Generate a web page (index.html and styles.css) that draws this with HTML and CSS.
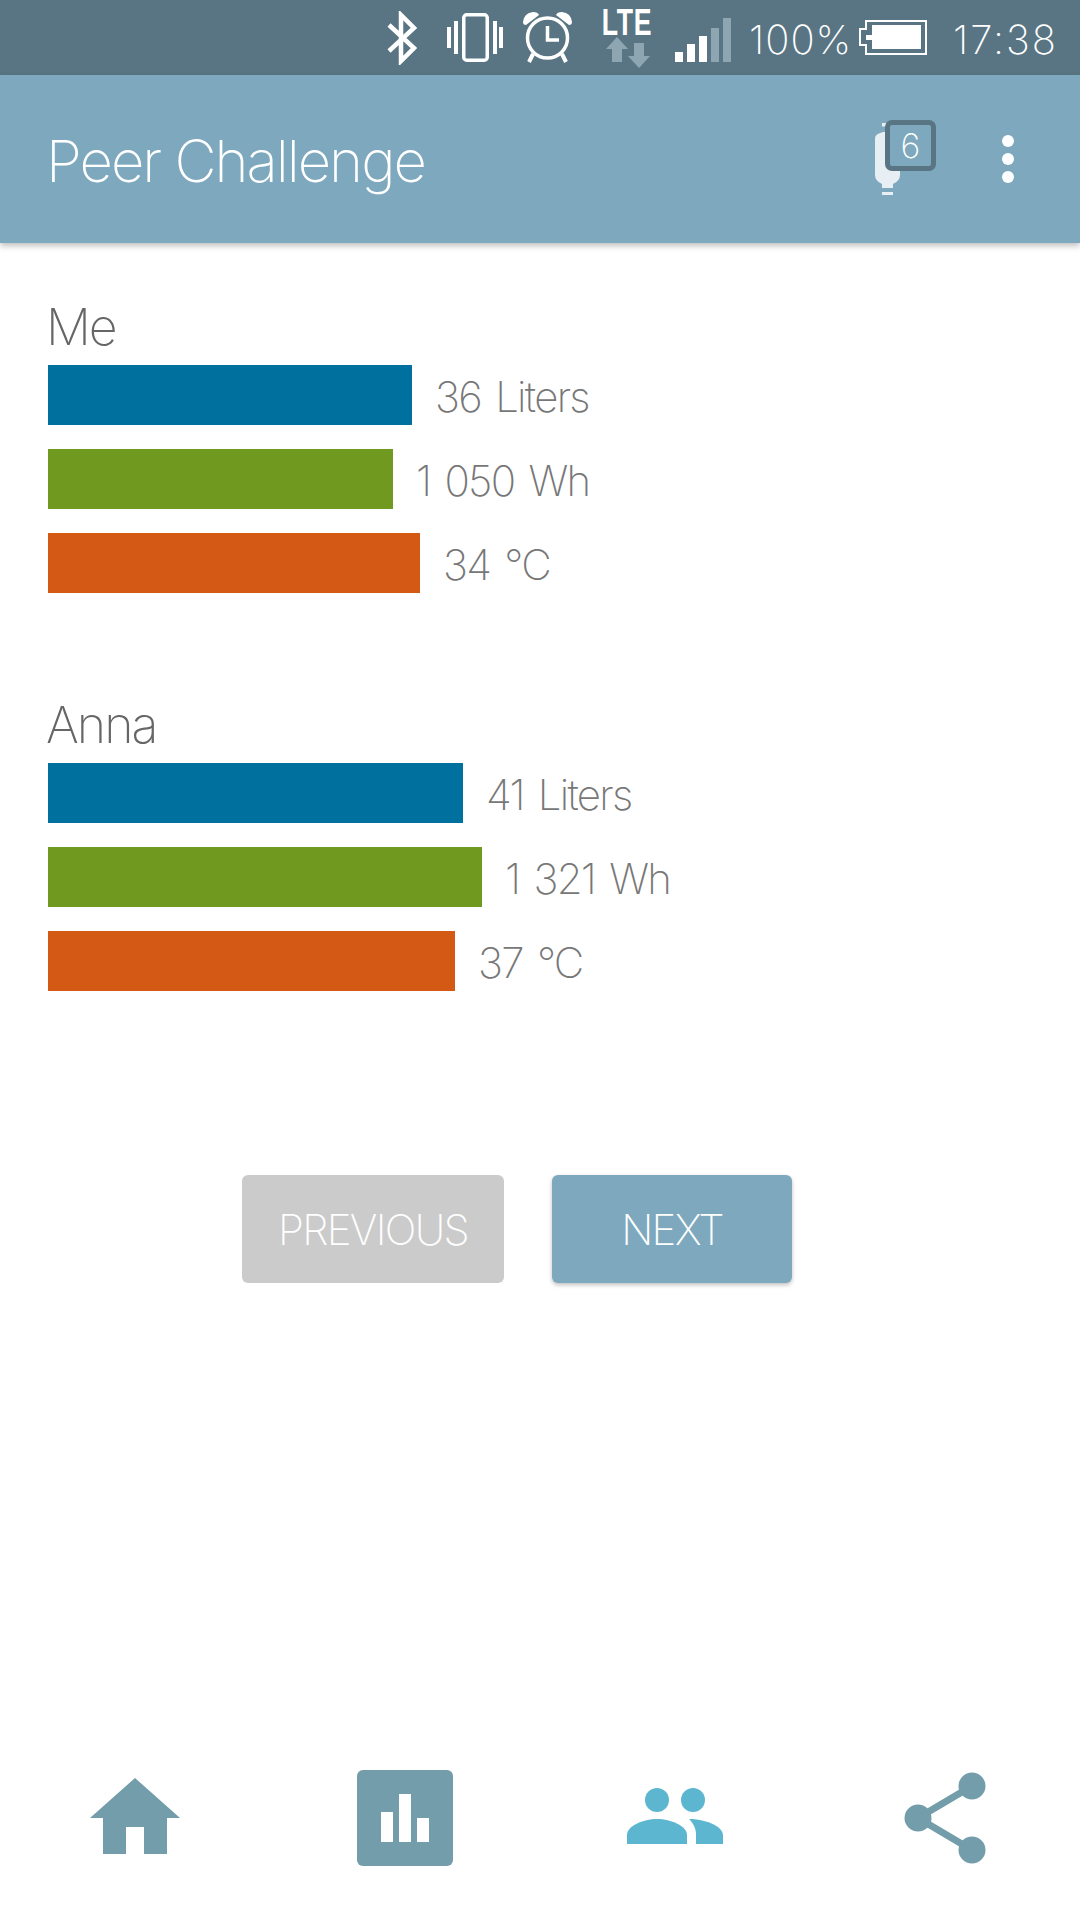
FILE: index.html
```html
<!DOCTYPE html>
<html lang="en">
<head>
  <meta charset="UTF-8" />
  <title>Peer Challenge</title>
  <link rel="stylesheet" href="styles.css">
</head>
<body>
  <div class="status-bar">
    <svg class="st-bt" width="30" height="54" viewBox="0 0 30 54"><path d="M2 14 L27 37 L14 50 V4 L27 17 L2 40" fill="none" stroke="#fff" stroke-width="4.5"/></svg>
    <svg class="st-vib" width="56" height="49" viewBox="0 0 56 49"><rect x="16.75" y="1.75" width="23.5" height="45.5" rx="3" fill="none" stroke="#fff" stroke-width="3.5"/><rect x="0" y="14" width="4" height="21" fill="#fff"/><rect x="7" y="8" width="4" height="33" fill="#fff"/><rect x="46" y="8" width="4" height="33" fill="#fff"/><rect x="52" y="14" width="4" height="21" fill="#fff"/></svg>
    <svg class="st-alarm" width="51" height="53" viewBox="0 0 51 53"><circle cx="25.5" cy="27" r="20" fill="none" stroke="#fff" stroke-width="3.5"/><path d="M25.5 15 V29 H37" fill="none" stroke="#fff" stroke-width="3.5"/><path d="M1 11 Q2 2 11 1 Q16 1 17 4 L4 14 Q1 14 1 11 Z M50 11 Q49 2 40 1 Q35 1 34 4 L47 14 Q50 14 50 11 Z" fill="#fff"/><path d="M11 43 L7 51 M40 43 L44 51" stroke="#fff" stroke-width="4"/></svg>
    <div class="st-lte">
      <span class="lte-text">LTE</span>
      <svg class="lte-arrows" width="44" height="31" viewBox="0 0 44 31"><path d="M11 0 L22 12 H16 V25 H6 V12 H0 Z" fill="#8ea6b1"/><path d="M33 31 L44 19 H38 V6 H28 V19 H22 Z" fill="#8ea6b1"/></svg>
    </div>
    <svg class="st-signal" width="56" height="44" viewBox="0 0 56 44"><rect x="0" y="34" width="8" height="10" fill="#fff"/><rect x="12" y="26" width="8" height="18" fill="#fff"/><rect x="24" y="18" width="8" height="26" fill="#fff"/><rect x="36" y="10" width="8" height="34" fill="#8ea6b1"/><rect x="48" y="0" width="8" height="44" fill="#8ea6b1"/></svg>
    <span class="st-pct">100%</span>
    <svg class="st-batt" width="68" height="35" viewBox="0 0 68 35"><path d="M7 1 H67 V34 H7 V25 H1 V9 H7 Z" fill="none" stroke="#fff" stroke-width="2"/><path d="M13 5 H62 V29 H13 V20 H7 V15 H13 Z" fill="#fff"/></svg>
    <span class="st-time">17:38</span>
  </div>

  <header class="app-bar">
    <h1>Peer Challenge</h1>
    <div class="bottle-wrap">
      <svg class="bottle" width="25" height="72" viewBox="0 0 25 72"><path d="M7 0 H12 V3.5 H7 Z M8 9 H17 L25 16 V52 Q25 58 18 61 V65 H7 V61 Q0 58 0 52 V15 Q0 11 8 9 Z M7 69 H18 V72 H7 Z" fill="#e8eff4"/></svg>
      <div class="badge">6</div>
    </div>
    <div class="menu"><i></i><i></i><i></i></div>
  </header>

  <main class="content">
    <section class="peer">
      <h2>Me</h2>
      <div class="row"><div class="bar blue" style="width:364px"></div><span>36 Liters</span></div>
      <div class="row"><div class="bar green" style="width:345px"></div><span>1 050 Wh</span></div>
      <div class="row"><div class="bar orange" style="width:372px"></div><span>34 °C</span></div>
    </section>
    <section class="peer">
      <h2>Anna</h2>
      <div class="row"><div class="bar blue" style="width:415px"></div><span>41 Liters</span></div>
      <div class="row"><div class="bar green" style="width:434px"></div><span>1 321 Wh</span></div>
      <div class="row"><div class="bar orange" style="width:407px"></div><span>37 °C</span></div>
    </section>

    <div class="buttons">
      <button class="btn btn-prev">PREVIOUS</button>
      <button class="btn btn-next">NEXT</button>
    </div>
  </main>

  <nav class="bottom-nav">
    <svg class="nav-home" width="90" height="76" viewBox="0 0 90 76"><path d="M45 0 L90 40 H77 V76 H54 V49 H36 V76 H13 V40 H0 Z" fill="#739daa"/></svg>
    <div class="nav-stats">
      <svg width="48" height="48" viewBox="0 0 48 48"><rect x="0" y="18" width="12" height="30" fill="#fff"/><rect x="18" y="0" width="12" height="48" fill="#fff"/><rect x="36" y="24" width="12" height="24" fill="#fff"/></svg>
    </div>
    <svg class="nav-people" width="96" height="56" viewBox="0 0 96 56"><circle cx="30" cy="12" r="12" fill="#5cb6d0"/><circle cx="66" cy="12" r="12" fill="#5cb6d0"/><path d="M0 56 V47 C0 38 16 31 30 31 C44 31 60 38 60 47 V56 Z" fill="#5cb6d0"/><path d="M62 31 C78 31 96 38 96 47 V56 H69 V46 C69 40 66 35 62 31 Z" fill="#5cb6d0"/></svg>
    <svg class="nav-share" width="82" height="92" viewBox="0 0 82 92"><path d="M68 14 L14 46 L68 78" fill="none" stroke="#739daa" stroke-width="7"/><circle cx="68" cy="14" r="13.5" fill="#739daa"/><circle cx="14" cy="46" r="13.5" fill="#739daa"/><circle cx="68" cy="78" r="13.5" fill="#739daa"/></svg>
  </nav>
</body>
</html>
```

FILE: styles.css
```css
* {
  box-sizing: border-box;
}

html, body {
  margin: 0;
  height: 1920px;
}

body {
  width: 1080px;
  display: flex;
  flex-direction: column;
  background-color: #fff;
  font-family: "Inter", "Liberation Sans", sans-serif;
  font-weight: 150;
  overflow: hidden;
}

.status-bar {
  height: 75px;
  background-color: #597583;
  color: #fff;
  display: flex;
  align-items: center;
  padding-left: 387px;
  font-size: 40px;
}

.st-vib { margin-left: 30px; }
.st-alarm { margin-left: 19px; }
.st-lte {
  margin: 1px 0 0 30px;
  display: flex;
  flex-direction: column;
  align-items: center;
  width: 49px;
}
.lte-text {
  height: 26px;
  font: 700 37px/30px "Liberation Sans", sans-serif;
  letter-spacing: 1px;
  transform: scaleX(0.72);
}
.lte-arrows { margin-top: 3px; }
.st-signal { margin: 5px 0 0 23px; }
.st-pct { margin: 4px 0 0 18px; width: 98px; letter-spacing: 1px; white-space: nowrap; }
.st-batt { margin-left: 12px; }
.st-time { margin: 4px 0 0 26px; letter-spacing: 2px; }

.app-bar {
  height: 168px;
  background-color: #7da8bd;
  color: #fff;
  display: flex;
  align-items: center;
  padding-left: 46px;
  box-shadow: 0 3px 6px rgba(0, 0, 0, 0.25);
  position: relative;
}

.app-bar h1 {
  margin: 4px 0 0 0;
  font-size: 58px;
  font-weight: 150;
  letter-spacing: -2px;
  flex: 1;
}

.bottle-wrap {
  position: relative;
  width: 61px;
  height: 75px;
  margin-top: -3px;
}

.bottle {
  position: absolute;
  left: 0;
  top: 3px;
}

.badge {
  position: absolute;
  left: 10px;
  top: 0;
  width: 51px;
  height: 51px;
  border: 5px solid #597583;
  border-radius: 7px;
  background-color: #7da8bd;
  font-size: 34px;
  line-height: 41px;
  text-align: center;
}

.menu {
  width: 12px;
  margin: 0 66px;
  display: flex;
  flex-direction: column;
  gap: 6px;
}

.menu i {
  width: 12px;
  height: 12px;
  border-radius: 50%;
  background-color: #fff;
}

.content {
  flex: 1;
  padding: 57px 0 0 48px;
}

.peer {
  height: 398px;
}

.peer h2 {
  margin: 0 0 0 -2px;
  height: 65px;
  font-size: 50px;
  line-height: 54px;
  font-weight: 150;
  letter-spacing: -2px;
  color: #666;
}

.row {
  display: flex;
  align-items: center;
  gap: 23px;
  height: 60px;
  margin-bottom: 24px;
  font-size: 42px;
  letter-spacing: -1.7px;
  word-spacing: 4px;
  color: #777;
}

.row span {
  margin-top: 2px;
}

.bar { height: 60px; }
.blue { background-color: #00719f; }
.green { background-color: #6f9a1f; }
.orange { background-color: #d35915; }

.buttons {
  display: flex;
  gap: 48px;
  margin: 79px 0 0 194px;
}

.btn {
  height: 108px;
  border: none;
  border-radius: 6px;
  color: #fff;
  font-family: inherit;
  font-weight: 150;
  font-size: 42px;
  letter-spacing: -1.7px;
}

.btn-prev { width: 262px; background-color: #cbcbcb; }
.btn-next { width: 240px; background-color: #7da8bd; box-shadow: 0 2px 4px rgba(0, 0, 0, 0.25); }

.bottom-nav {
  position: relative;
  height: 150px;
  flex-shrink: 0;
}

.nav-home, .nav-stats, .nav-people, .nav-share {
  position: absolute;
}

.nav-home { left: 90px; top: 8px; }
.nav-stats {
  left: 357px;
  top: 0;
  width: 96px;
  height: 96px;
  border-radius: 6px;
  background-color: #739daa;
  display: flex;
  align-items: center;
  justify-content: center;
}
.nav-people { left: 627px; top: 18px; }
.nav-share { left: 904px; top: 2px; }
```
